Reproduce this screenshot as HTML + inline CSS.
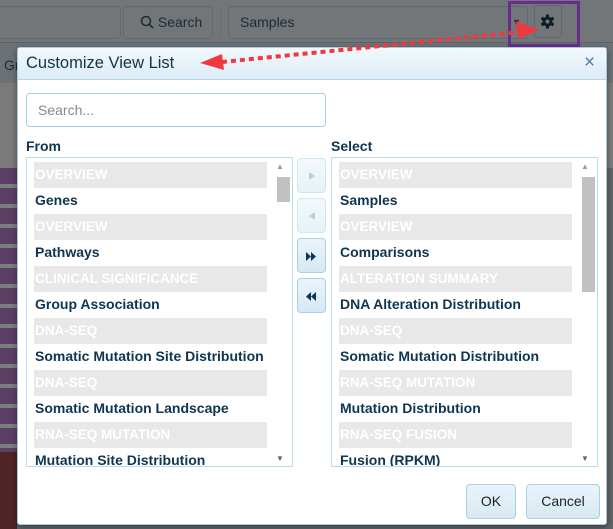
<!DOCTYPE html>
<html><head><style>
*{margin:0;padding:0;box-sizing:border-box}
body{width:613px;height:529px;overflow:hidden;position:relative;background:#5f6366;font-family:"Liberation Sans",sans-serif}
.a{position:absolute}
.row{position:absolute;left:0;width:233px;height:26px;font-weight:bold;line-height:25px;white-space:nowrap;padding-left:1px}
.h{background:#e8e8e8;color:#fff;font-size:13.5px}
.i{color:#0f3550;font-size:14px}
.list{position:absolute;border:1px solid #b8dcea;background:#fff;overflow:hidden}
.btn{position:absolute;border:1px solid #a9d0e3;border-radius:4px;background:linear-gradient(#eaf4fa,#d6e9f3)}
</style></head><body>
<div class="a" style="left:0;top:0;width:613px;height:42px;background:#727679"></div>
<div class="a" style="left:0;top:42px;width:613px;height:1px;background:#5d6164"></div>
<div class="a" style="left:0;top:43px;width:613px;height:40px;background:#6b7175"></div>
<div class="a" style="left:0;top:83px;width:613px;height:85px;background:#7a7a7a"></div>
<div class="a" style="left:0;top:168px;width:17px;height:361px;background:repeating-linear-gradient(#5b3f64 0 16px,#7d7d7d 16px 20px)"></div>
<div class="a" style="left:0;top:452px;width:17px;height:77px;background:#4e2426"></div>
<div class="a" style="left:4px;top:57px;font-size:14px;color:#1a2a36">Gr</div>
<div class="a" style="left:-5px;top:6px;width:126px;height:33px;border:1px solid #5e6a72;border-radius:4px"></div>
<div class="a" style="left:123px;top:6px;width:90px;height:33px;border:1px solid #5e6a72;border-radius:4px;color:#1c2a34;font-size:14px;line-height:31px;padding-left:16px">
<svg width="14" height="14" style="vertical-align:-2px"><circle cx="6" cy="6" r="4.5" fill="none" stroke="#1c2a34" stroke-width="1.5"/><line x1="9.3" y1="9.3" x2="13" y2="13" stroke="#1c2a34" stroke-width="1.6"/></svg> Search</div>
<div class="a" style="top:8px;width:1px;height:28px;background:#666c70;left:220px"></div>
<div class="a" style="left:228px;top:6px;width:300px;height:33px;border:1px solid #5e6a72;border-radius:4px;color:#1c2a34;font-size:14px;line-height:31px;padding-left:11px">Samples<span style="position:absolute;right:6px;top:0;font-size:9px">▼</span></div>
<div class="a" style="left:534px;top:5px;width:28px;height:33px;border:1px solid #5e6a72;border-radius:4px"></div>
<svg class="a" style="left:540px;top:14px" width="15" height="15" viewBox="0 0 16 16"><g fill="#0b1c28"><circle cx="8" cy="8" r="5.2"/><rect x="6.3" y="0.5" width="3.4" height="15" rx="0.8"/><rect x="6.3" y="0.5" width="3.4" height="15" rx="0.8" transform="rotate(60 8 8)"/><rect x="6.3" y="0.5" width="3.4" height="15" rx="0.8" transform="rotate(120 8 8)"/></g><circle cx="8" cy="8" r="2.2" fill="#727679"/></svg>
<div class="a" style="left:508px;top:1px;width:72px;height:46px;border:3px solid #6b2c90"></div>
<div class="a" style="left:17px;top:47px;width:590px;height:478px;background:#fff;border:1px solid #a9c9d9;border-radius:3px;box-shadow:0 2px 6px rgba(0,0,0,.4)">
 <div class="a" style="left:0;top:0;width:588px;height:32px;background:linear-gradient(#f2f8fc,#dcecf6);border-bottom:1px solid #b8d3e2"></div>
 <div class="a" style="left:8px;top:6px;font-size:16.5px;color:#14324a">Customize View List</div>
 <div class="a" style="left:566px;top:4px;font-size:19px;color:#5b7e94">×</div>
 <div class="a" style="left:8px;top:45px;width:300px;height:34px;border:1px solid #a9d0e3;border-radius:4px;font-size:14px;color:#888;line-height:32px;padding-left:11px">Search...</div>
 <div class="a" style="left:8px;top:90px;font-size:14px;font-weight:bold;color:#0f3550">From</div>
 <div class="a" style="left:313px;top:90px;font-size:14px;font-weight:bold;color:#0f3550">Select</div>
</div>
<div class="list" style="left:26px;top:157px;width:267px;height:310px">
 <div class="a" style="left:7px;top:4px">
  <div class="row h" style="top:0">OVERVIEW</div><div class="row i" style="top:26px">Genes</div>
  <div class="row h" style="top:52px">OVERVIEW</div><div class="row i" style="top:78px">Pathways</div>
  <div class="row h" style="top:104px">CLINICAL SIGNIFICANCE</div><div class="row i" style="top:130px">Group Association</div>
  <div class="row h" style="top:156px">DNA-SEQ</div><div class="row i" style="top:182px">Somatic Mutation Site Distribution</div>
  <div class="row h" style="top:208px">DNA-SEQ</div><div class="row i" style="top:234px">Somatic Mutation Landscape</div>
  <div class="row h" style="top:260px">RNA-SEQ MUTATION</div><div class="row i" style="top:286px">Mutation Site Distribution</div>
 </div>
 <div class="a" style="left:249px;top:4px;font-size:8px;color:#999">▲</div>
 <div class="a" style="left:250px;top:19px;width:13px;height:25px;background:#c1c1c1"></div>
 <div class="a" style="left:249px;top:296px;font-size:8px;color:#666">▼</div>
</div>
<div class="btn" style="left:297px;top:158px;width:29px;height:35px;opacity:.55"><svg class="a" style="left:10px;top:12px" width="8" height="10"><polygon points="1,1 7,5 1,9" fill="#7ab"/></svg></div>
<div class="btn" style="left:297px;top:198px;width:29px;height:35px;opacity:.55"><svg class="a" style="left:10px;top:12px" width="8" height="10"><polygon points="7,1 1,5 7,9" fill="#7ab"/></svg></div>
<div class="btn" style="left:297px;top:238px;width:29px;height:35px"><svg class="a" style="left:8px;top:13px" width="12" height="9"><polygon points="0,0 5,4.5 0,9" fill="#0f3550"/><polygon points="5,0 10,4.5 5,9" fill="#0f3550"/></svg></div>
<div class="btn" style="left:297px;top:278px;width:29px;height:35px"><svg class="a" style="left:8px;top:13px" width="12" height="9"><polygon points="5,0 0,4.5 5,9" fill="#0f3550"/><polygon points="10,0 5,4.5 10,9" fill="#0f3550"/></svg></div>
<div class="list" style="left:331px;top:157px;width:267px;height:310px">
 <div class="a" style="left:7px;top:4px">
  <div class="row h" style="top:0">OVERVIEW</div><div class="row i" style="top:26px">Samples</div>
  <div class="row h" style="top:52px">OVERVIEW</div><div class="row i" style="top:78px">Comparisons</div>
  <div class="row h" style="top:104px">ALTERATION SUMMARY</div><div class="row i" style="top:130px">DNA Alteration Distribution</div>
  <div class="row h" style="top:156px">DNA-SEQ</div><div class="row i" style="top:182px">Somatic Mutation Distribution</div>
  <div class="row h" style="top:208px">RNA-SEQ MUTATION</div><div class="row i" style="top:234px">Mutation Distribution</div>
  <div class="row h" style="top:260px">RNA-SEQ FUSION</div><div class="row i" style="top:286px">Fusion (RPKM)</div>
 </div>
 <div class="a" style="left:249px;top:4px;font-size:8px;color:#999">▲</div>
 <div class="a" style="left:250px;top:19px;width:13px;height:115px;background:#c1c1c1"></div>
 <div class="a" style="left:249px;top:296px;font-size:8px;color:#666">▼</div>
</div>
<div class="btn" style="left:466px;top:484px;width:50px;height:35px;text-align:center;line-height:33px;font-size:14px;color:#222">OK</div>
<div class="btn" style="left:526px;top:484px;width:74px;height:35px;text-align:center;line-height:33px;font-size:14px;color:#222">Cancel</div>
<svg class="a" style="left:0;top:0" width="613" height="100">
 <line x1="222" y1="62" x2="520" y2="32" stroke="#f0393e" stroke-width="4" stroke-dasharray="5 4"/>
 <polygon points="200,63 222,54 224,70" fill="#f0393e"/>
 <polygon points="539,30 516,21 518,39" fill="#f0393e"/>
</svg>
</body></html>
